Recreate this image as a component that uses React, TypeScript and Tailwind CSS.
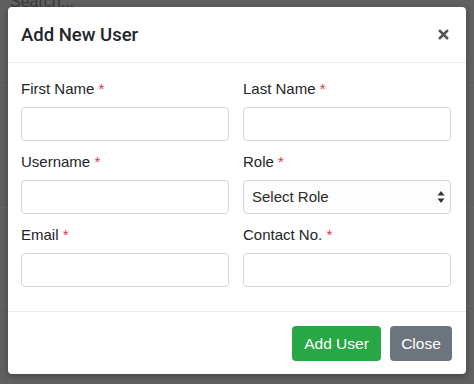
import { X } from "lucide-react";

function Field({ label, children }: { label: string; children: React.ReactNode }) {
  return (
    <div className="mb-[10px]">
      <label className="mb-[7px] block h-[22px] text-[15px] leading-[22px] text-[#212529]">
        {label} <span className="text-[#dc3545]">*</span>
      </label>
      {children}
    </div>
  );
}

function TextInput() {
  return (
    <input
      type="text"
      className="block h-[34px] w-full rounded-[4px] border border-[#d3d6d9] bg-white px-[8px] text-[15px] outline-none"
    />
  );
}

function RoleSelect() {
  return (
    <div className="flex h-[34px] w-full items-center justify-between rounded-[4px] border border-[#d3d6d9] bg-[#fdfdfd] pl-[8px] pr-[5px] text-[15px] text-[#2b2b2b]">
      <span>Select Role</span>
      <svg width="8" height="14" viewBox="0 0 8 14" className="text-[#333]">
        <path d="M4 1 L7.5 5.5 H0.5 Z" fill="currentColor" />
        <path d="M4 13 L7.5 8.5 H0.5 Z" fill="currentColor" />
      </svg>
    </div>
  );
}

export default function App() {
  return (
    <div
      className="relative h-[384px] w-[474px] overflow-hidden bg-[#606060]"
      style={{ fontFamily: '"Liberation Sans", Arial, sans-serif' }}
    >
      {/* page behind the backdrop */}
      <div className="-mt-[9px] px-[10px] text-[16px] leading-[22px] text-[#3a3a3a]">Search...</div>
      <div className="mt-[72px] border-t border-[#666]" />
      <div className="mt-[121px] border-t border-[#666]" />
      <div className="mt-[97px] border-t border-[#666]" />

      {/* modal */}
      <div className="absolute left-[8px] top-[7px] w-[458px] rounded-[4px] bg-white shadow-[0_2px_6px_rgba(0,0,0,0.3)]">
        <div className="flex h-[56px] items-center justify-between border-b border-[#e9ecef] pl-[13px] pr-[15px]">
          <h5 className="font-['Roboto',sans-serif] text-[18.5px] font-medium leading-[26px] text-[#212529]">
            Add New User
          </h5>
          <button className="text-[#555]">
            <X className="h-[15px] w-[15px]" strokeWidth={4} />
          </button>
        </div>

        <div className="grid grid-cols-2 gap-x-[14px] pb-[14px] pl-[13px] pr-[15px] pt-[15px]">
          <Field label="First Name">
            <TextInput />
          </Field>
          <Field label="Last Name">
            <TextInput />
          </Field>
          <Field label="Username">
            <TextInput />
          </Field>
          <Field label="Role">
            <RoleSelect />
          </Field>
          <Field label="Email">
            <TextInput />
          </Field>
          <Field label="Contact No.">
            <TextInput />
          </Field>
        </div>

        <div className="flex justify-end gap-[9px] border-t border-[#e9ecef] pb-[13px] pr-[14px] pt-[14px]">
          <button className="h-[35px] w-[89px] rounded-[4px] bg-[#28a745] text-[15.5px] text-white">Add User</button>
          <button className="h-[35px] w-[62px] rounded-[4px] bg-[#6c757d] text-[15.5px] text-white">Close</button>
        </div>
      </div>
    </div>
  );
}
